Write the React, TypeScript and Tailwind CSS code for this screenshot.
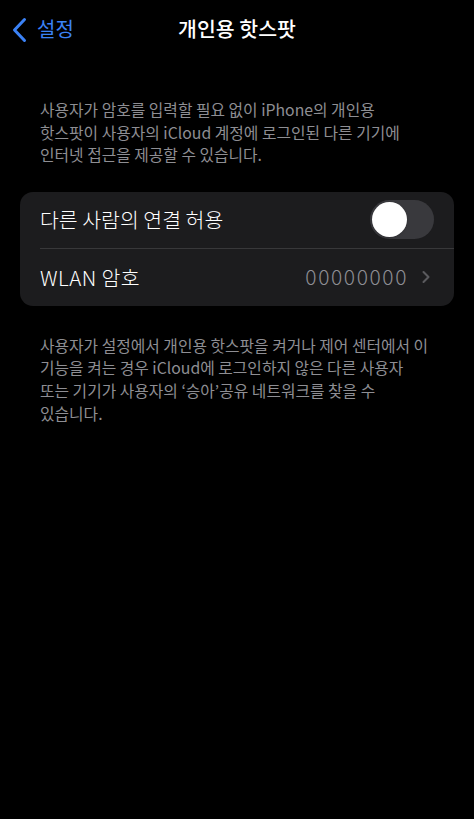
import { ChevronRight } from "lucide-react";

const font = {
  fontFamily: '"Noto Sans CJK KR", "Noto Sans", sans-serif',
};

function BackChevron() {
  return (
    <svg width="17" height="26" viewBox="0 0 17 26" fill="none" aria-hidden="true">
      <path
        d="M13.5 2.5 3.5 13l10 10.5"
        stroke="#3b82f6"
        strokeWidth="3"
        strokeLinecap="round"
        strokeLinejoin="round"
      />
    </svg>
  );
}

export default function App() {
  return (
    <div className="min-h-[819px] w-full bg-black text-white" style={font}>
      <header className="relative flex h-[60px] items-center px-[11px]">
        <button className="flex items-center gap-[9px] text-[20px] text-[#3b82f6]">
          <BackChevron />
          <span className="-mt-[2px]">설정</span>
        </button>
        <h1 className="absolute inset-x-0 top-0 flex h-[60px] items-center justify-center text-[20.5px] font-medium pointer-events-none -mt-[2px]">
          개인용 핫스팟
        </h1>
      </header>

      <p className="mt-[39px] px-[40px] text-[15.8px] leading-[22.5px] text-[#8e8e93]">
        사용자가 암호를 입력할 필요 없이 iPhone의 개인용
        <br />
        핫스팟이 사용자의 iCloud 계정에 로그인된 다른 기기에
        <br />
        인터넷 접근을 제공할 수 있습니다.
      </p>

      <div className="mx-[20px] mt-[25px] overflow-hidden rounded-[13px] bg-[#1c1c1e]">
        <div className="flex h-[56px] items-center justify-between pl-[20px] pr-[20px]">
          <span className="text-[20.5px] font-light">다른 사람의 연결 허용</span>
          <div className="flex h-[39px] w-[64px] items-center rounded-full bg-[#39393d] p-[2px]">
            <div className="h-[35px] w-[35px] rounded-full bg-white shadow" />
          </div>
        </div>
        <div className="ml-[20px] h-px bg-[#38383a]" />
        <div className="flex h-[57px] items-center justify-between pl-[20px] pr-[18px]">
          <span className="text-[20.5px] font-light tracking-[0.4px]">WLAN 암호</span>
          <div className="flex items-center gap-[8px] text-[#8e8e93]">
            <span className="text-[21px] font-light tracking-[1.6px]">00000000</span>
            <ChevronRight className="h-[20px] w-[20px] text-[#5a5a5e]" strokeWidth={2.5} />
          </div>
        </div>
      </div>

      <p className="mt-[29px] px-[40px] text-[15.8px] leading-[22.7px] text-[#8e8e93]">
        사용자가 설정에서 개인용 핫스팟을 켜거나 제어 센터에서 이
        <br />
        기능을 켜는 경우 iCloud에 로그인하지 않은 다른 사용자
        <br />
        또는 기기가 사용자의 ‘승아’공유 네트워크를 찾을 수
        <br />
        있습니다.
      </p>
    </div>
  );
}
